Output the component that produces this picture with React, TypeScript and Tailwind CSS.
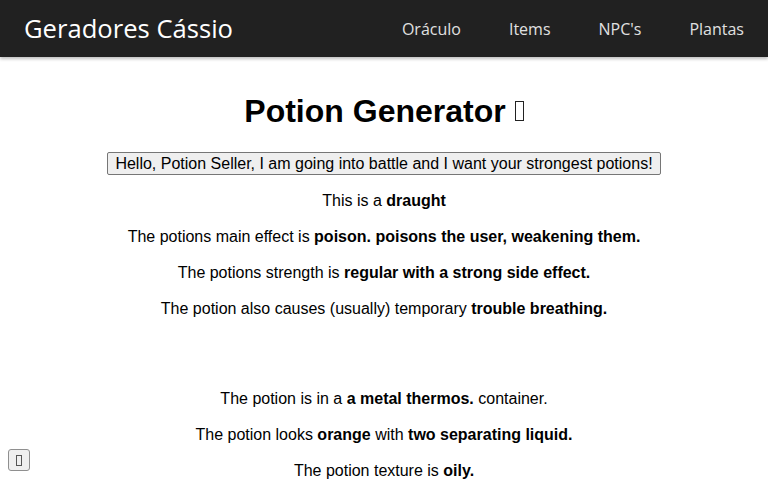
const links = ['Oráculo', 'Items', "NPC's", 'Plantas'];

const Navbar = () => (
  <nav className="flex h-[57px] items-center justify-between bg-[#212121] px-6 font-['Open_Sans',sans-serif] shadow-[0_2px_3px_rgba(0,0,0,0.25)]">
    <a className="text-[25.6px] leading-none text-white">Geradores Cássio</a>
    <ul className="flex gap-12">
      {links.map((link) => (
        <li key={link} className="text-[16px] text-[#e0e0e0]">
          {link}
        </li>
      ))}
    </ul>
  </nav>
);

const Line = ({ children }: { children: React.ReactNode }) => (
  <p className="text-[16px] leading-6">{children}</p>
);

// missing-glyph box, the emoji font is absent in the reference
const Tofu = ({ className }: { className: string }) => (
  <span className={`inline-block align-middle ${className}`} />
);

export default function App() {
  return (
    <div className="min-h-screen bg-white font-['Liberation_Sans',Arial,sans-serif] text-black">
      <Navbar />
      <main className="flex flex-col items-center text-center">
        <h1 className="mt-[34px] flex items-center gap-[9px] text-[32px] leading-10 font-bold">
          Potion Generator
          <Tofu className="h-[20px] w-[9px] border-[1.5px] border-[#222]" />
        </h1>
        <button className="mt-[21px] rounded-[2px] border border-[#767676] bg-[#efefef] px-[7px] py-px text-[16px] leading-[19px]">
          Hello, Potion Seller, I am going into battle and I want your strongest potions!
        </button>
        <div className="mt-[14px] flex flex-col gap-3">
          <Line>
            This is a <b>draught</b>
          </Line>
          <Line>
            The potions main effect is <b>poison. poisons the user, weakening them.</b>
          </Line>
          <Line>
            The potions strength is <b>regular with a strong side effect.</b>
          </Line>
          <Line>
            The potion also causes (usually) temporary <b>trouble breathing.</b>
          </Line>
          <div className="h-[42px]" />
          <Line>
            The potion is in a <b>a metal thermos.</b> container.
          </Line>
          <Line>
            The potion looks <b>orange</b> with <b>two separating liquid.</b>
          </Line>
          <Line>
            The potion texture is <b>oily.</b>
          </Line>
        </div>
      </main>
      <button className="fixed bottom-[9px] left-2 flex h-[22px] w-[22px] items-center justify-center rounded-[3px] border border-[#8f8f8f] bg-[#efefef]">
        <Tofu className="h-[11px] w-[6px] border border-[#555]" />
      </button>
    </div>
  );
}
